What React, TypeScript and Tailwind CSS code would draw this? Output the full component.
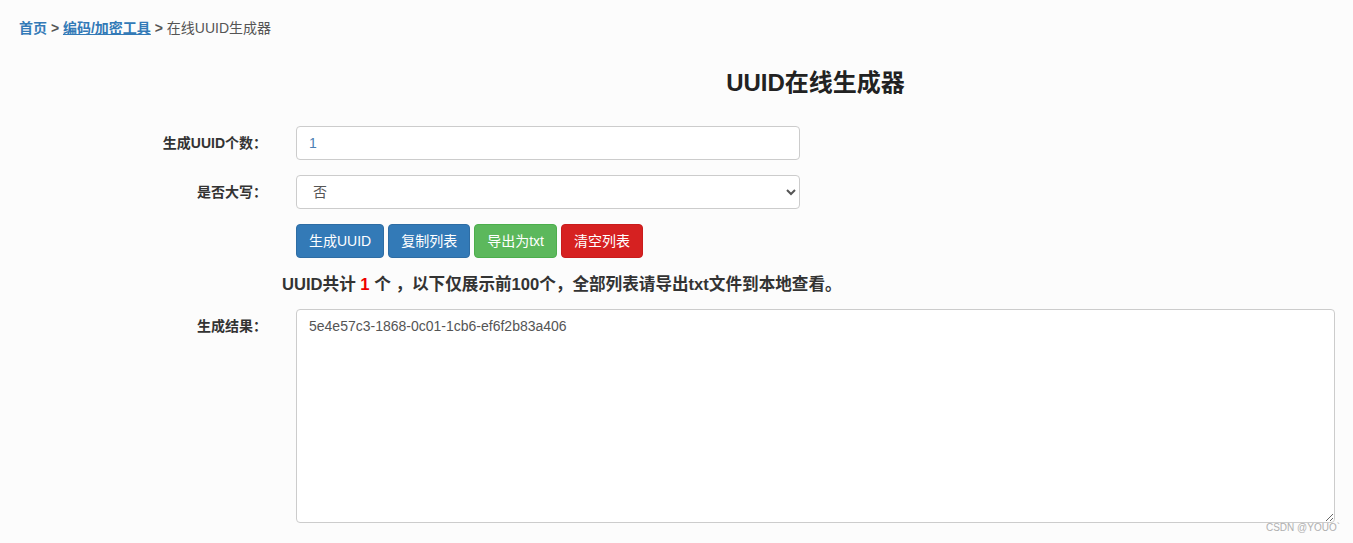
import React from "react";

const font = "font-['Liberation_Sans','Noto_Sans_CJK_SC',sans-serif]";

export default function App() {
  return (
    <div className={`relative min-h-[543px] bg-[#fcfcfc] text-[#333] ${font}`}>
      {/* breadcrumb */}
      <div className="pl-[19px] pt-[19px] text-[14px] leading-[18px]">
        <a className="font-bold text-[#337ab7] no-underline">首页</a>
        <span className="font-bold text-[#555]"> &gt; </span>
        <a className="font-bold text-[#337ab7] underline">编码/加密工具</a>
        <span className="font-bold text-[#555]"> &gt; </span>
        <span className="text-[#555]">在线UUID生成器</span>
      </div>

      {/* title */}
      <div className="mt-[31px] grid grid-cols-[296px_1fr] pr-[18px]">
        <div />
        <h3 className="text-center text-[24px] font-bold leading-[30px] text-[#222]">UUID在线生成器</h3>
      </div>

      {/* form */}
      <div className="mt-[28px] flex flex-col gap-[15px] pr-[18px]">
        <div className="grid grid-cols-[296px_1fr] items-center">
          <label className="pr-[29px] text-right text-[14px] font-bold leading-[18px] text-[#333]">生成UUID个数：</label>
          <input
            defaultValue="1"
            className="h-[34px] w-[504px] rounded-[4px] border border-[#ccc] bg-white px-[12px] text-[14px] text-[#4b7fb3] outline-none"
          />
        </div>
        <div className="grid grid-cols-[296px_1fr] items-center">
          <label className="pr-[29px] text-right text-[14px] font-bold leading-[18px] text-[#333]">是否大写：</label>
          <select
            defaultValue="0"
            className="h-[34px] w-[504px] rounded-[4px] border border-[#ccc] bg-white px-[12px] text-[14px] text-[#555] outline-none"
          >
            <option value="0">否</option>
            <option value="1">是</option>
          </select>
        </div>
        <div className="grid grid-cols-[296px_1fr] items-center">
          <div />
          <div className="flex gap-[4px]">
            <button className="h-[34px] rounded-[4px] border border-[#2e6da4] bg-[#337ab7] px-[12px] text-[14px] text-white">生成UUID</button>
            <button className="h-[34px] rounded-[4px] border border-[#2e6da4] bg-[#337ab7] px-[12px] text-[14px] text-white">复制列表</button>
            <button className="h-[34px] rounded-[4px] border border-[#4cae4c] bg-[#5cb85c] px-[12px] text-[14px] text-white">导出为txt</button>
            <button className="h-[34px] rounded-[4px] border border-[#c91c1c] bg-[#d62121] px-[12px] text-[14px] text-white">清空列表</button>
          </div>
        </div>
      </div>

      {/* info */}
      <div className="ml-[282px] mt-[16px] text-[16.6px] font-bold leading-[22px] text-[#333]">
        UUID共计 <span className="text-[#e00]">1</span> 个 ，以下仅展示前100个，全部列表请导出txt文件到本地查看。
      </div>

      {/* result */}
      <div className="mt-[13px] grid grid-cols-[296px_1fr] pr-[18px]">
        <label className="pr-[29px] pt-[8px] text-right text-[14px] font-bold leading-[18px] text-[#333]">生成结果：</label>
        <textarea
          readOnly
          defaultValue="5e4e57c3-1868-0c01-1cb6-ef6f2b83a406"
          className="h-[214px] w-full rounded-[4px] border border-[#ccc] bg-white px-[12px] py-[6px] text-[14px] leading-[20px] text-[#555] outline-none"
        />
      </div>

      <div className="absolute bottom-[9px] right-[13px] text-[10px] leading-[12px] text-[#b0b0b0]">CSDN @YOUO`</div>
    </div>
  );
}
